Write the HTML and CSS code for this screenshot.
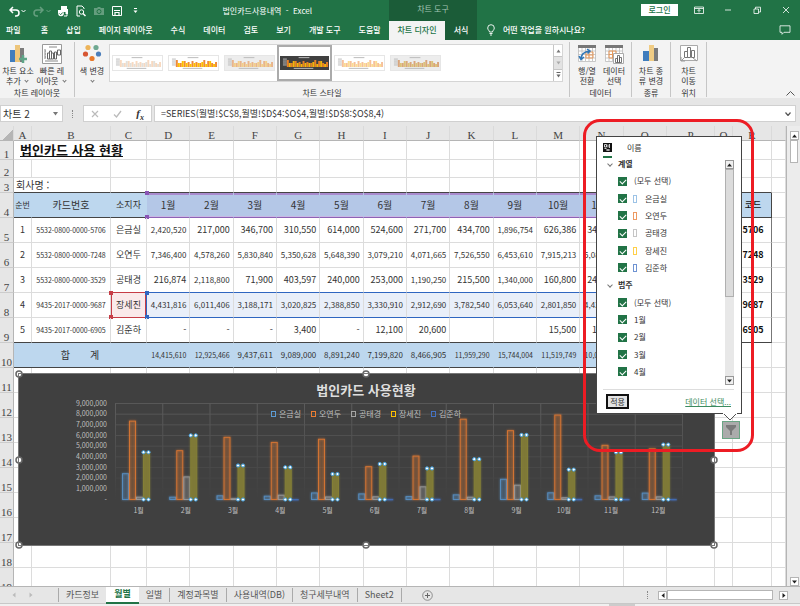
FILE: index.html
```html
<!DOCTYPE html>
<html lang="ko">
<head>
  <meta charset="UTF-8">
  <meta name="viewport" content="width=device-width, initial-scale=1">
  <title>법인카드사용내역 - Excel</title>
  <link rel="stylesheet" href="styles.css">
</head>
<body>

  <svg class="defs" width="0" height="0">
    <symbol id="thumb" viewBox="0 0 50 14">
      <path class="t-grid" d="M3 3h4M3 5h4M3 7h4M3 9h4M19 1.500h11M14 12.500h20" fill="none" stroke-width="1"/>
      <path class="t-a" d="M7 4h2v7H7zM11 7h2v4h-2zM15 5h2v6h-2zM19 6h2v5h-2zM23 5h2v6h-2zM27 6h2v5h-2zM31 7h2v4h-2zM35 4h2v7h-2zM39 5h2v6h-2zM43 7h2v4h-2zM47 6h2v5h-2z"/>
      <path class="t-b" d="M9 7h2v4H9zM13 5h2v6h-2zM17 7h2v4h-2zM21 8h2v3h-2zM25 7h2v4h-2zM29 7h2v4h-2zM33 6h2v5h-2zM37 8h2v3h-2zM41 5h2v6h-2zM45 8h2v3h-2z"/>
    </symbol>
  </svg>

  <div class="app">

    <header class="titlebar">
      <div class="title-left">
        <div class="quick">
          <button aria-label="실행 취소"><svg width="14" height="12" viewBox="0 0 14 12"><path d="M3 5h6a3 3 0 0 1 0 6H8M6 2L3 5l3 3" fill="none" stroke="#fff" stroke-width="1.5"/></svg></button>
          <button class="drop" aria-label="취소 목록"><svg width="5" height="4" viewBox="0 0 5 4"><path d="M.5 1l2 2 2-2" fill="none" stroke="#fff"/></svg></button>
          <button class="dim" aria-label="다시 실행"><svg width="14" height="12" viewBox="0 0 14 12"><path d="M11 5H5a3 3 0 0 0 0 6h1M8 2l3 3-3 3" fill="none" stroke="#fff" stroke-width="1.5"/></svg></button>
          <button class="drop dim" aria-label="실행 목록"><svg width="5" height="4" viewBox="0 0 5 4"><path d="M.5 1l2 2 2-2" fill="none" stroke="#fff"/></svg></button>
          <button aria-label="빠른 인쇄"><svg width="12" height="12" viewBox="0 0 12 12"><path d="M4 4V1h6v3h1v5H9V7H4v1H1V5h3z" fill="#fff"/><circle cx="4" cy="8.500" r="2.800" fill="#fff"/><path d="M2.500 8.500l1.200 1.200 2-2.200" fill="none" stroke="#217346"/><path d="M8 8h2v3H7" fill="none" stroke="#fff"/></svg></button>
          <button aria-label="인쇄 미리 보기"><svg width="12" height="12" viewBox="0 0 12 12"><path d="M9 4V3L7 1H2v10h3" fill="none" stroke="#fff"/><circle cx="6.500" cy="7" r="2.200" fill="none" stroke="#fff"/><path d="M8 8.500l2.500 2.500" stroke="#fff" stroke-width="1.500"/></svg></button>
          <button class="dim" aria-label="카메라"><svg width="12" height="12" viewBox="0 0 12 12"><path d="M1 3h3l1-1h2l1 1h3v7H1z" fill="#fff"/><circle cx="6" cy="6.500" r="2" fill="none" stroke="#217346"/></svg></button>
          <button aria-label="저장"><svg width="12" height="12" viewBox="0 0 12 12"><path d="M1.500 1.500h9v9h-9z" fill="none" stroke="#fff"/><path d="M3 5.500h6M4 10.500v-3h4v3" fill="none" stroke="#fff" stroke-width="1.200"/></svg></button>
          <button class="drop" aria-label="도구 모음 사용자 지정"><svg width="5" height="6" viewBox="0 0 5 6"><path d="M1 .5h3" stroke="#fff"/><path d="M.5 2.500h4l-2 2.500z" fill="#fff"/></svg></button>
          <span class="doc-name">법인카드사용내역 &nbsp;- &nbsp;Excel</span>
        </div>
        <nav class="tabs">
          <a href="#" class="file">파일</a>
          <a href="#">홈</a>
          <a href="#">삽입</a>
          <a href="#">페이지 레이아웃</a>
          <a href="#">수식</a>
          <a href="#">데이터</a>
          <a href="#">검토</a>
          <a href="#">보기</a>
          <a href="#">개발 도구</a>
          <a href="#">도움말</a>
        </nav>
      </div>
      <div class="chart-tools">
        <span>차트 도구</span>
        <nav>
          <a href="#" class="active">차트 디자인</a>
          <a href="#">서식</a>
        </nav>
      </div>
      <div class="title-right">
        <div class="window">
          <button class="login">로그인</button>
          <button aria-label="리본 표시 옵션"><svg width="10" height="10" viewBox="0 0 10 10"><path d="M.5 2h9v6.500h-9zM.5 3.500h9M5 7.500v-3M3.500 6L5 4.500 6.500 6" fill="none" stroke="#fff" stroke-width=".8"/></svg></button>
          <button aria-label="최소화"><svg width="10" height="10" viewBox="0 0 10 10"><path d="M2 5h6" stroke="#fff" stroke-width=".8"/></svg></button>
          <button aria-label="이전 크기로"><svg width="10" height="10" viewBox="0 0 10 10"><path d="M2 4h4.500v4.500H2zM3.500 4V2.200h5V7H6.500" fill="none" stroke="#fff" stroke-width=".8"/></svg></button>
          <button aria-label="닫기"><svg width="10" height="10" viewBox="0 0 10 10"><path d="M2 2l6 6M8 2L2 8" stroke="#fff" stroke-width=".8"/></svg></button>
        </div>
        <div class="tell-me">
          <svg width="10" height="12" viewBox="0 0 10 12"><path d="M3.500 8c0-1.500-1.800-2-1.800-4a3.300 3.300 0 0 1 6.600 0c0 2-1.800 2.500-1.800 4zM3.500 9.500h3M4 11h2" fill="none" stroke="#fff" stroke-width=".9"/></svg>
          <span>어떤 작업을 원하시나요?</span>
          <button aria-label="메모"><svg width="12" height="10" viewBox="0 0 12 10"><path d="M1 .8h10v6.500H5L3 9.300v-2H1z" fill="none" stroke="#fff" stroke-width=".8"/></svg></button>
        </div>
      </div>
    </header>

    <section class="ribbon">
      <div class="group layout">
        <div class="tools">
          <button>
            <svg width="20" height="20" viewBox="0 0 20 20"><path d="M2 6h5v12H2z" fill="#3f7dbd"/><path d="M7 1h5v17H7z" fill="#edc57a"/><path d="M12 4h4v14h-4z" fill="#7b7b7b"/><path d="M15 11v8M11 15h8" stroke="#5fa588" stroke-width="2.500"/></svg>
            차트 요소<br>추가 <i class="chev"></i>
          </button>
          <button>
            <svg width="20" height="20" viewBox="0 0 20 20"><path d="M.5 .5h19v19H.5z" fill="#fff" stroke="#999"/><path d="M7 3h8M3 5v10M3 17h13M3 7h1M3 10h1M3 13h1" stroke="#888" fill="none"/><path d="M5.500 9h2v6h-2zM7.500 7h2v8h-2zM9.500 9h2v6h-2zM12.500 8h2v7h-2zM15.500 6h3v5h-3z" fill="#fff" stroke="#666"/></svg>
            빠른 레<br>이아웃 <i class="chev"></i>
          </button>
        </div>
        <div class="label">차트 레이아웃</div>
      </div>
      <div class="group styles">
        <div class="tools">
          <button class="color-btn">
            <svg width="20" height="20" viewBox="0 0 20 20"><circle cx="6" cy="3.500" r="2.600" fill="#edb45a"/><circle cx="14" cy="3.500" r="2.600" fill="#6fa891"/><circle cx="3.500" cy="10" r="2.600" fill="#d75632"/><circle cx="16.500" cy="10" r="2.600" fill="#4a7ebb"/><circle cx="10" cy="14.500" r="2.600" fill="#e8782a"/></svg>
            색 변경<br><i class="chev"></i>
          </button>
          <div class="gallery">
            <button class="st1" aria-label="스타일 1"><svg><use href="#thumb"/></svg></button>
            <button class="st2" aria-label="스타일 2"><svg><use href="#thumb"/></svg></button>
            <button class="st3" aria-label="스타일 3"><svg><use href="#thumb"/></svg></button>
            <button class="st4 picked" aria-label="스타일 4"><svg><use href="#thumb"/></svg></button>
            <button class="st5" aria-label="스타일 5"><svg><use href="#thumb"/></svg></button>
            <button class="st6" aria-label="스타일 6"><svg><use href="#thumb"/></svg></button>
            <div class="spin">
              <button aria-label="위로"><svg width="5" height="4" viewBox="0 0 5 4"><path d="M.5 3.500h4l-2-3z" fill="#777"/></svg></button>
              <button class="off" aria-label="아래로"><svg width="5" height="4" viewBox="0 0 5 4"><path d="M.5 .5h4l-2 3z" fill="#aaa"/></svg></button>
              <button aria-label="자세히"><svg width="5" height="6" viewBox="0 0 5 6"><path d="M.5 .5h4" stroke="#666"/><path d="M.5 2.500h4l-2 3z" fill="#666"/></svg></button>
            </div>
          </div>
        </div>
        <div class="label">차트 스타일</div>
      </div>
      <div class="group data">
        <div class="tools">
          <button>
            <svg width="20" height="20" viewBox="0 0 20 20"><path d="M1.500 3.500h17v14h-17zM1.500 7h17M1.500 10.500h17M1.500 14h17M5 3v14M8.500 3v14M12 3v14M15.500 3v14" fill="#fff" stroke="#bbb" stroke-width=".8"/><path d="M1 1h18v3H1z" fill="#777"/><path d="M9 8h7v6H9zM12 8v6M9 11h7" fill="none" stroke="#e89a5c"/><path d="M4 15c0-4 3-7 8-8M10 5l3 2-2.500 2.500M2 12l2 3.500L7 13" fill="none" stroke="#2e75b6" stroke-width="1.500"/></svg>
            행/열<br>전환
          </button>
          <button>
            <svg width="20" height="20" viewBox="0 0 20 20"><path d="M1.500 3.500h17v14h-17zM1.500 7h17M1.500 10.500h17M1.500 14h17M5 3v14M8.500 3v14M12 3v14M15.500 3v14" fill="#fff" stroke="#bbb" stroke-width=".8"/><path d="M1 1h18v3H1z" fill="#777"/><path d="M5 7h7v7H5zM8.500 7v7M5 10.500h7" fill="none" stroke="#e89a5c"/><path d="M9.500 9.500h10v10h-10z" fill="#fff" stroke="#aaa"/><path d="M11.500 14.500h2v4h-2zM13.500 11.500h2v7h-2zM15.500 13.500h2v5h-2z" fill="#fff" stroke="#555" stroke-width=".8"/></svg>
            데이터<br>선택
          </button>
        </div>
        <div class="label">데이터</div>
      </div>
      <div class="group kind">
        <div class="tools">
          <button>
            <svg width="20" height="20" viewBox="0 0 20 20"><path d="M2 7h6v10H2z" fill="#3f7dbd"/><path d="M8 1h5v16H8z" fill="#f0cc84"/><path d="M13 4h4v13h-4z" fill="#7b7b7b"/></svg>
            차트 종<br>류 변경
          </button>
        </div>
        <div class="label">종류</div>
      </div>
      <div class="group place">
        <div class="tools">
          <button>
            <svg width="20" height="20" viewBox="0 0 20 20"><path d="M1.500 1.500h17v15h-17z" fill="#fff" stroke="#aaa"/><path d="M5.500 7.500h3v6h-3zM8.500 3.500h3v10h-3zM12.500 6.500h3v7h-3z" fill="#fff" stroke="#777"/><path d="M2 17l4-4M2 13v4h4M18 17l-4-3" fill="none" stroke="#999"/></svg>
            차트<br>이동
          </button>
        </div>
        <div class="label">위치</div>
      </div>
      <button class="collapse" aria-label="리본 메뉴 축소"><svg width="9" height="5" viewBox="0 0 9 5"><path d="M.5 4.500l4-4 4 4" fill="none" stroke="#555"/></svg></button>
    </section>

    <div class="formula-bar">
      <div class="name-box">
        <input type="text" value="차트 2" aria-label="이름 상자">
        <svg width="5" height="4" viewBox="0 0 5 4"><path d="M0 0h5L2.500 3.500z" fill="#777"/></svg>
      </div>
      <span class="dots"></span>
      <div class="fx">
        <button aria-label="취소"><svg width="8" height="8" viewBox="0 0 8 8"><path d="M1 1l6 6M7 1L1 7" stroke="#bbb" stroke-width="1.200"/></svg></button>
        <button aria-label="입력"><svg width="9" height="8" viewBox="0 0 9 8"><path d="M1 4.500L3.500 7 8 1" fill="none" stroke="#bbb" stroke-width="1.300"/></svg></button>
        <button class="fn" aria-label="함수 삽입"><i>f</i><sub>x</sub></button>
      </div>
      <div class="formula">
        <input type="text" value="=SERIES(월별!$C$8,월별!$D$4:$O$4,월별!$D$8:$O$8,4)" aria-label="수식">
        <svg width="6" height="4" viewBox="0 0 6 4"><path d="M.5 .5L3 3.500 5.500 .5" fill="none" stroke="#555" stroke-width="1.200"/></svg>
      </div>
    </div>

    <main class="workspace">
      <div class="sheet">
        <table>
          <colgroup>
            <col class="c-num"><col class="c-a"><col class="c-b"><col class="c-c">
            <col span="12">
            <col class="c-p"><col class="c-a"><col class="c-r"><col class="c-num">
          </colgroup>
          <thead>
            <tr id="letters"></tr>
          </thead>
          <tbody id="rows"></tbody>
        </table>
      </div>

      <div class="vscroll">
        <button aria-label="위로 스크롤"><svg width="5" height="4" viewBox="0 0 5 4"><path d="M0 3.500h5L2.500 .5z" fill="#222"/></svg></button>
        <div class="thumb"></div>
        <button class="down" aria-label="아래로 스크롤"><svg width="5" height="4" viewBox="0 0 5 4"><path d="M0 .5h5L2.500 3.500z" fill="#222"/></svg></button>
      </div>

      <div class="chart">
        <svg id="chart" viewBox="0 0 695 171">
          <defs>
            <linearGradient id="fade" gradientUnits="userSpaceOnUse" x1="0" y1="29" x2="0" y2="125">
              <stop offset="0" stop-color="#5c5c5c"/>
              <stop offset="1" stop-color="#404040"/>
            </linearGradient>
          </defs>
        </svg>
      </div>

      <button class="filter-btn" aria-label="차트 필터"><svg width="12" height="12" viewBox="0 0 12 12"><path d="M1 1h10v2L7 7v4H5V7L1 3z" fill="#7a7a7a"/></svg></button>

      <div class="popup">
        <div class="popup-tabs">
          <button class="on" aria-label="값"><svg width="9" height="9" viewBox="0 0 9 9"><path d="M0 0h9v9H0z" fill="#111"/><path d="M1.500 1.500h2v2.500h-2zM1.500 5.500h2M5 1.500v3M6.500 1v4M3 7h4M5 6v2" fill="none" stroke="#fff" stroke-width=".8"/></svg></button>
          <button>이름</button>
        </div>
        <div class="popup-body">
          <div class="choices">
            <h4><i class="chev"></i>계열</h4>
            <label><input type="checkbox" checked>(모두 선택)</label>
            <label><input type="checkbox" checked><b class="key k1"></b>은금실</label>
            <label><input type="checkbox" checked><b class="key k2"></b>오연두</label>
            <label><input type="checkbox" checked><b class="key k3"></b>공태경</label>
            <label><input type="checkbox" checked><b class="key k4"></b>장세진</label>
            <label><input type="checkbox" checked><b class="key k5"></b>김준하</label>
            <h4><i class="chev"></i>범주</h4>
            <label><input type="checkbox" checked>(모두 선택)</label>
            <label><input type="checkbox" checked>1월</label>
            <label><input type="checkbox" checked>2월</label>
            <label><input type="checkbox" checked>3월</label>
            <label><input type="checkbox" checked>4월</label>
          </div>
          <div class="list-scroll">
            <button aria-label="위로"><svg width="5" height="4" viewBox="0 0 5 4"><path d="M0 3.500h5L2.500 .5z" fill="#222"/></svg></button>
            <div class="thumb"></div>
            <button class="down" aria-label="아래로"><svg width="5" height="4" viewBox="0 0 5 4"><path d="M0 .5h5L2.500 3.500z" fill="#222"/></svg></button>
          </div>
        </div>
        <div class="popup-foot">
          <button>적용</button>
          <a href="#">데이터 선택...</a>
        </div>
        <svg class="tail" width="14" height="8" viewBox="0 0 14 8"><path d="M0 0h14v1h-1L7 7 1 1H0z" fill="#fff"/><path d="M1 1l6 6 6-6" fill="none" stroke="#555"/></svg>
      </div>

      <div class="mark"></div>
    </main>

    <footer class="sheet-tabs">
      <div class="arrows">
        <button aria-label="이전 시트"><svg width="4" height="6" viewBox="0 0 4 6"><path d="M3.500 .5v5L.5 3z" fill="#bbb"/></svg></button>
        <button aria-label="다음 시트"><svg width="4" height="6" viewBox="0 0 4 6"><path d="M.5 .5v5l3-2.500z" fill="#bbb"/></svg></button>
      </div>
      <a href="#" class="before">카드정보</a>
      <a href="#" class="active">월별</a>
      <a href="#">일별</a>
      <a href="#">계정과목별</a>
      <a href="#">사용내역(DB)</a>
      <a href="#">청구세부내역</a>
      <a href="#">Sheet2</a>
      <button class="add" aria-label="새 시트"><svg width="11" height="11" viewBox="0 0 11 11"><path d="M5.500 3v5M3 5.500h5" stroke="#666"/><circle cx="5.500" cy="5.500" r="4.800" fill="none" stroke="#777" stroke-width=".8"/></svg></button>
      <span class="dots"></span>
      <div class="hscroll">
        <button aria-label="왼쪽"><svg width="4" height="5" viewBox="0 0 4 5"><path d="M3.500 0v5L.5 2.500z" fill="#222"/></svg></button>
        <div class="thumb"></div>
        <button aria-label="오른쪽"><svg width="4" height="5" viewBox="0 0 4 5"><path d="M.5 0v5l3-2.500z" fill="#222"/></svg></button>
      </div>
    </footer>
    <div class="status"><span></span></div>
  </div>

  <script>
    const cards = [
      { no: 1, card: '5532-0800-0000-5706', name: '은금실', code: '5706', v: [2420520, 217000, 346700, 310550, 614000, 524600, 271700, 434700, 1896754, 626386, 345200, 600000] },
      { no: 2, card: '5532-0800-0000-7248', name: '오연두', code: '7248', v: [7346400, 4578260, 5830840, 5350628, 5648390, 3079210, 4071665, 7526550, 6453610, 7915213, 5080400, 4750000] },
      { no: 3, card: '5532-0800-0000-3529', name: '공태경', code: '3529', v: [216874, 2118800, 71900, 403597, 240000, 253000, 1190250, 215500, 1340000, 160800, 241500, 250000] },
      { no: 4, card: '9435-2017-0000-9687', name: '장세진', code: '9687', v: [4431816, 6011406, 3188171, 3020825, 2388850, 3330910, 2912690, 3782540, 6053640, 2801850, 4420300, 5150000] },
      { no: 5, card: '9435-2017-0000-6905', name: '김준하', code: '6905', v: [0, 0, 0, 3400, 0, 12100, 20600, null, null, 15500, 12500, 10000] }
    ];
    const totals = [14415610, 12925466, 9437611, 9089000, 8891240, 7199820, 8466905, 11959290, 15744004, 11519749, 10099900];

    function amount(n) {
      if (n === null) return '';
      return n === 0 ? '-' : n.toLocaleString('en-US');
    }

    // wide numbers shrink to fit the column
    function sizeOf(n) {
      if (n >= 10000000) return 'n-small';
      return n >= 1000000 ? 'n-mid' : 'n-big';
    }

    function blanks(count) {
      return '<td></td>'.repeat(count);
    }

    function renderSheet() {
      document.getElementById('letters').innerHTML = '<th class="corner"></th>' +
        'ABCDEFGHIJKLMNOPQR'.split('').map(l => `<th>${l}</th>`).join('') + '<th></th>';

      let html = '';
      html += `<tr class="r1"><th>1</th><td colspan="3" class="sheet-title">법인카드 사용 현황</td>${blanks(16)}</tr>`;
      html += `<tr class="r2"><th>2</th>${blanks(19)}</tr>`;
      html += `<tr class="r3"><th>3</th><td colspan="2" class="company">회사명 :</td>${blanks(14)}<td class="plain"></td><td></td><td class="plain"></td></tr>`;

      let months = '';
      for (let m = 1; m <= 11; m++) {
        let dots = '';
        if (m === 1) dots = '<i class="dot tl"></i><i class="dot bl"></i>';
        months += `<td class="month">${dots}${m}월</td>`;
      }
      html += `<tr class="head"><th>4</th><td class="small">순번</td><td>카드번호</td><td class="name">소지자</td>${months}<td class="month"></td><td></td><td class="plain"></td><td class="code">코드</td><td class="plain"></td></tr>`;

      cards.forEach((c, i) => {
        const sel = c.no === 4;
        const nums = c.v.slice(0, 11).map((n, k) => {
          const dots = sel && k === 0 ? '<i class="dot tl"></i><i class="dot bl"></i>' : '';
          return `<td class="num ${sizeOf(n)}">${dots}${amount(n)}</td>`;
        }).join('');
        const nameDots = sel ? '<i class="dot tl"></i><i class="dot bl"></i>' : '';
        html += `<tr class="item${sel ? ' selected' : ''}${c.no === 3 ? ' above' : ''}"><th>${i + 5}</th><td class="no">${c.no}</td><td class="card">${c.card}</td><td class="name">${nameDots}${c.name}</td>${nums}<td class="num"></td><td></td><td></td><td class="code">${c.code}</td><td></td></tr>`;
      });

      html += '<tr class="total"><th>10</th><td colspan="3">합&emsp;&emsp;계</td>' +
        totals.map(n => `<td class="num ${sizeOf(n)}">${amount(n)}</td>`).join('') +
        '<td></td><td></td><td class="plain"></td><td class="plain"></td><td class="plain"></td></tr>';

      for (let r = 11; r <= 19; r++) html += `<tr><th>${r}</th>${blanks(19)}</tr>`;
      document.getElementById('rows').innerHTML = html;
    }

    function renderChart() {
      const left = 96, right = 663, top = 29.5, base = 125.5;
      const unit = (base - top) / 9;
      const slot = (right - left) / 12;
      let s = '<text class="c-title" x="347" y="21">법인카드 사용현황</text>';

      for (let i = 0; i <= 9; i++) {
        const y = base - unit * i;
        if (i > 0) s += `<path d="M${left} ${y}H${right}" class="grid" opacity="${i / 9}"/>`;
        s += `<text class="c-axis" x="88" y="${y + 2}">${i ? i + ',000,000' : '-'}</text>`;
      }
      for (let i = 0; i <= 12; i++) {
        s += `<rect x="${left + slot * i}" y="${top}" width="1" height="96" fill="url(#fade)"/>`;
      }

      cards.forEach((c, k) => {
        s += `<g class="series s${k + 1}">`;
        c.v.forEach((n, m) => {
          if (!n) return;
          const h = unit * n / 1000000;
          s += `<rect x="${left + slot * m + 7.5 + k * 7}" y="${base - h}" width="6" height="${Math.max(h, .5)}"/>`;
        });
        s += '</g>';
      });

      // selected series
      cards[3].v.forEach((n, m) => {
        const x = left + slot * m + 28.5;
        const y = base - unit * n / 1000000;
        [[x, y], [x + 5, y], [x, base], [x + 5, base]].forEach(p => {
          s += `<circle class="pt" cx="${p[0]}" cy="${p[1]}" r="1.6"/>`;
        });
      });

      for (let m = 0; m < 12; m++) {
        s += `<text class="c-month" x="${left + slot * (m + .5)}" y="139">${m + 1}월</text>`;
      }
      cards.forEach((c, k) => {
        s += `<g class="legend s${k + 1}"><rect x="${252.5 + k * 40}" y="37.5" width="4" height="5"/></g>`;
        s += `<text class="c-legend" x="${260 + k * 40}" y="42.500">${c.name}</text>`;
      });
      [[0, 0], [347, 0], [695, 0], [0, 86], [695, 86], [0, 171], [347, 171], [695, 171]].forEach(p => {
        s += `<circle class="handle" cx="${p[0]}" cy="${p[1]}" r="3"/>`;
      });
      document.getElementById('chart').innerHTML += s;
    }

    renderSheet();
    renderChart();
  </script>

</body>
</html>
```
FILE: styles.css
```css
* {
  box-sizing: border-box;
}
body {
  margin: 0;
  font-family: "Noto Sans CJK KR", sans-serif;
  font-size: 8px;
  line-height: 10px;
  color: #333;
  background-color: #e6e6e6;
}
button {
  font: inherit;
  color: inherit;
  padding: 0;
  border: none;
  background: none;
}
input {
  font: inherit;
  color: inherit;
  margin: 0;
}
a {
  color: inherit;
  text-decoration: none;
}
svg {
  display: block;
}
.defs {
  position: absolute;
}
.app {
  display: flex;
  flex-direction: column;
  height: 100vh;
  overflow: hidden;
}

/* TITLE BAR */
.titlebar {
  display: flex;
  height: 40px;
  flex: none;
  background-color: #217346;
  color: white;
}
.title-left {
  width: 389px;
}
.quick {
  display: flex;
  align-items: center;
  height: 21px;
  padding-left: 7px;
}
.quick button {
  width: 14px;
  margin-right: 4px;
}
.quick .drop {
  width: 5px;
  margin: 0 6px 0 -4px;
}
.quick .drop:nth-of-type(9) {
  margin-left: 4px;
}
.dim {
  opacity: 0.3;
}
.doc-name {
  flex: 1;
  padding-right: 77px;
  text-align: right;
  white-space: nowrap;
}
.tabs {
  display: flex;
  gap: 18px;
  height: 19px;
  line-height: 18px;
  padding-left: 6px;
  font-weight: 500;
  white-space: nowrap;
}
.tabs .file {
  margin-right: 2px;
}
.chart-tools {
  display: flex;
  flex-direction: column;
  width: 88px;
  background-color: #1b5c38;
  text-align: center;
}
.chart-tools span {
  height: 21px;
  line-height: 18px;
  color: #a5c5b3;
}
.chart-tools nav {
  display: flex;
  flex: 1;
  line-height: 18px;
  font-weight: 500;
}
.chart-tools a {
  flex: 1;
}
.chart-tools .active {
  flex: none;
  width: 56px;
  background-color: #f3f3f3;
  color: #217346;
}
.title-right {
  flex: 1;
}
.window {
  display: flex;
  align-items: center;
  justify-content: flex-end;
  gap: 19px;
  height: 20px;
  padding-right: 9px;
}
.login {
  width: 37px;
  height: 12px;
  margin-right: -3px;
  background-color: white;
  color: #217346;
  font-weight: 500;
}
.tell-me {
  display: flex;
  align-items: center;
  gap: 7px;
  height: 20px;
  padding: 0 9px;
  font-weight: 500;
}
.tell-me button {
  margin-left: auto;
}

/* RIBBON */
.ribbon {
  display: flex;
  flex: none;
  height: 58px;
  padding-top: 2px;
  background-color: #f3f3f3;
}
.group {
  display: flex;
  flex-direction: column;
  justify-content: space-between;
  margin-bottom: 1px;
  border-right: 1px solid #c6c6c6;
  text-align: center;
}
.tools {
  display: flex;
  justify-content: center;
  padding-top: 2px;
}
.tools > button {
  display: flow-root;
  width: 34px;
  white-space: nowrap;
}
.tools > button > svg {
  margin: 0 auto 2px;
}
.label {
  height: 9px;
}
.layout {
  width: 75px;
}
.layout .tools {
  justify-content: flex-start;
  padding-left: 1px;
}
.styles {
  flex: 0 1 495px;
}
.data {
  width: 62px;
}
.data .tools > button {
  width: 27px;
}
.kind {
  width: 39px;
}
.place {
  width: 36px;
}
.chev {
  display: inline-block;
  width: 3px;
  height: 3px;
  margin: 0 2px 2px;
  border: solid #777;
  border-width: 0 1px 1px 0;
  transform: rotate(45deg);
}
.collapse {
  margin: auto 5px 2px auto;
}
.gallery {
  display: flex;
  align-items: center;
  flex: 1;
  gap: 5px;
  height: 38px;
  margin-right: 6px;
  padding-left: 2px;
  border: 1px solid #d5d5d5;
  background-color: white;
}
.gallery > button {
  width: 51px;
  height: 16px;
  border: 1px solid #e6e6e6;
}
.gallery > button svg {
  width: 100%;
  height: 14px;
}
.gallery > .picked {
  width: 55px;
  height: 36px;
  margin: 0 -3px;
  padding: 9px 1px;
  border: 2px solid #ababab;
}
.picked svg {
  background-color: #404040;
}
.t-grid {
  stroke: #bbb;
}
.t-a {
  fill: var(--a);
}
.t-b {
  fill: var(--b);
}
.st1 {
  --a: #f8d9c0;
  --b: #e3e0da;
}
.st2 {
  --a: #ee8a3a;
  --b: #ffc000;
}
.st3 {
  --a: #e8b48c;
  --b: #f2cf8a;
  background-color: #ededed;
}
.st4 {
  --a: #e87f28;
  --b: #f2b50c;
}
.st5 {
  --a: #f6c09a;
  --b: #fbdc93;
}
.st6 {
  --a: #d9a57c;
  --b: #dcc279;
  background-color: #ededed;
}
.spin {
  display: flex;
  flex-direction: column;
  width: 9px;
  height: 36px;
  margin-left: auto;
  border-left: 1px solid #c6c6c6;
}
.spin button {
  display: grid;
  place-items: center;
  flex: 1;
}
.spin .off {
  border: solid #c6c6c6;
  border-width: 1px 0;
  background-color: #e3e3e3;
}

/* FORMULA BAR */
.formula-bar {
  display: flex;
  flex: none;
  height: 28px;
  padding: 7px 4px 4px 0;
  font-size: 10px;
}
.name-box,
.fx,
.formula {
  display: flex;
  align-items: center;
  border: 1px solid #d0d0d0;
  background-color: white;
}
.name-box {
  width: 63px;
  padding-right: 4px;
}
.formula-bar input {
  flex: 1;
  min-width: 0;
  height: 15px;
  padding: 0 2px;
  border: none;
  background: none;
}
.dots {
  width: 2px;
  height: 8px;
  margin: auto 9px;
  border-left: 1px dotted #888;
}
.fx {
  justify-content: space-around;
  width: 69px;
  margin-right: 2px;
}
.fn {
  font-family: "Liberation Serif", serif;
  font-size: 11px;
  font-weight: bold;
}
.fn sub {
  font-size: 8px;
  line-height: 0;
  font-style: italic;
}
.formula {
  flex: 1;
  padding: 0 4px;
}
.formula input {
  font-size: 9px;
}

/* SHEET */
.workspace {
  position: relative;
  display: flex;
  flex: 1;
  min-height: 0;
}
.sheet {
  flex: 1;
  overflow: hidden;
  background-color: white;
}
.sheet table {
  width: 100%;
  table-layout: fixed;
  border-collapse: separate;
  border-spacing: 0;
  font-size: 10px;
}
.c-num {
  width: 14px;
}
.c-a {
  width: 18px;
}
.c-b {
  width: 79px;
}
.c-c {
  width: 36px;
}
.c-p {
  width: 48px;
}
.c-r {
  width: 39px;
}
.sheet th {
  padding: 0;
  background-color: #e6e6e6;
  font: 11px/10px "Liberation Serif", serif;
  color: #444;
}
.sheet thead th {
  height: 15px;
  padding-top: 3px;
  border-right: 1px solid #dadada;
  border-bottom: 1px solid #b5b5b5;
}
.sheet thead .corner {
  background: linear-gradient(135deg, #e6e6e6 60%, #b5b5b5 60%);
}
.sheet tbody th {
  vertical-align: bottom;
  border-right: 1px solid #b5b5b5;
  border-bottom: 1px solid #ccc;
}
.sheet td {
  position: relative;
  height: 25px;
  padding: 0;
  border-right: 1px solid #dcdcdc;
  border-bottom: 1px solid #dcdcdc;
  text-align: center;
  white-space: nowrap;
}
.sheet .r1 td {
  height: 19px;
}
.sheet .r2 td {
  height: 18px;
}
.sheet .r3 td {
  height: 15px;
  border-bottom-color: #444;
}
.sheet .r3 .plain {
  border-bottom-color: #dcdcdc;
}
.sheet .sheet-title {
  padding-left: 6px;
  text-align: left;
  font-size: 13px;
  font-weight: bold;
  color: #111;
  text-decoration: underline;
}
.sheet .company {
  padding-left: 2px;
  text-align: left;
}
.sheet .head td,
.sheet .total td {
  background-color: #bdd7ee;
  border-right-color: #bdd7ee;
  border-bottom-color: #444;
}
.sheet .head .month {
  background-color: #b4c7e7;
  border-right-color: #b4c7e7;
  border-bottom-color: #8d62b5;
  box-shadow: inset 0 2px #a98bce, inset 0 -1px #c9b8e4;
}
.sheet .head .plain,
.sheet .total .plain {
  background-color: white;
  border-color: #dcdcdc;
}
.sheet .small {
  font-size: 8px;
}
.sheet .name,
.sheet .no {
  font-size: 9px;
}
.sheet .card {
  font-size: 7px;
}
.sheet .num {
  padding-right: 3px;
  text-align: right;
}
.n-small {
  font-size: 7px;
}
.n-mid {
  font-size: 8px;
}
.n-big {
  font-size: 9px;
}
.sheet .code {
  padding-left: 2px;
  border-right-color: #777;
  font-size: 9px;
  font-weight: bold;
  color: #111;
}
.sheet .head .code {
  border-right-color: #444;
  font-weight: 500;
}
.sheet .item:nth-child(9) td {
  border-bottom-color: #444;
}
.sheet .item:nth-child(9) td:last-child {
  border-bottom-color: #dcdcdc;
}
.sheet .above .num {
  border-bottom-color: #2f66c0;
}
.sheet .above .name {
  border-bottom-color: #c63c46;
}
.sheet .selected .num {
  background-color: #e9eff9;
  border-bottom-color: #2f66c0;
}
.sheet .selected .name {
  background-color: #fae9ea;
  border-bottom-color: #c63c46;
  border-right-color: #2f66c0;
  box-shadow: inset 1px 0 #c63c46, inset -1px 0 #c63c46;
}
.dot {
  position: absolute;
  left: -2px;
  width: 4px;
  height: 4px;
  background-color: #8a55b5;
}
.tl {
  top: -2px;
}
.bl {
  bottom: -2px;
}
.selected .num .dot {
  background-color: #2f66c0;
}
.selected .name .dot {
  background-color: #c63c46;
}

/* SCROLLBARS */
.vscroll {
  display: flex;
  flex-direction: column;
  width: 14px;
  padding: 5px 2px 0 3px;
  border-left: 1px solid #b5b5b5;
  background-color: #ececec;
}
.vscroll button,
.list-scroll button,
.hscroll button {
  display: grid;
  place-items: center;
  width: 9px;
  height: 9px;
  border: 1px solid #b5b5b5;
  background-color: white;
}
.vscroll .thumb {
  height: 23px;
  border: 1px solid #b5b5b5;
  background-color: white;
}
.down {
  margin-top: auto;
}

/* CHART */
.chart {
  position: absolute;
  top: 248px;
  left: 19px;
  right: 86px;
  background-color: #404040;
  outline: 1px solid #777;
}
.chart svg {
  width: 100%;
  overflow: visible;
}
.chart text {
  fill: #bfbfbf;
  font-size: 7px;
}
.chart .c-title {
  fill: #dedede;
  font-size: 13px;
  font-weight: bold;
  text-anchor: middle;
}
.c-axis {
  text-anchor: end;
}
.c-month {
  text-anchor: middle;
}
.chart .c-legend {
  font-size: 8px;
}
.grid {
  stroke: #585858;
}
.s1 {
  color: #5b9bd5;
}
.s2 {
  color: #ed7d31;
}
.s3 {
  color: #a5a5a5;
}
.s4 {
  color: #ffc000;
}
.s5 {
  color: #4472c4;
}
.series rect {
  fill: currentColor;
  fill-opacity: 0.15;
  stroke: currentColor;
  stroke-opacity: 0.75;
}
.series {
  filter: drop-shadow(0 0 1px currentColor);
}
.s4.series {
  color: #8a8436;
}
.s4.series rect {
  fill-opacity: 0.6;
  stroke-opacity: 0.8;
}
.legend rect {
  fill: none;
  stroke: currentColor;
}
.pt {
  fill: white;
  stroke: #3b9be0;
}
.handle {
  fill: white;
  stroke: #666;
  stroke-width: 1.5;
}

/* CHART FILTER */
.filter-btn {
  position: absolute;
  top: 295px;
  right: 60px;
  display: grid;
  place-items: center;
  width: 18px;
  height: 18px;
  border: 1px solid #6aa584;
  background-color: #ababab;
}
.popup {
  position: absolute;
  top: 10px;
  right: 58px;
  display: flex;
  flex-direction: column;
  width: 146px;
  height: 278px;
  padding: 6px 7px 0 6px;
  border: 1px solid #444;
  background-color: white;
}
.popup-tabs {
  display: flex;
  gap: 15px;
  height: 15px;
}
.popup-tabs .on {
  height: 15px;
  padding-bottom: 4px;
  border-bottom: 2px solid #217346;
}
.popup-tabs button:last-child {
  height: 10px;
}
.popup-body {
  display: flex;
  justify-content: space-between;
  flex: 1;
  padding: 1px 0 4px;
  border-bottom: 1px solid #ddd;
}
.choices {
  display: flex;
  flex-direction: column;
  justify-content: space-between;
  padding-bottom: 8px;
}
.choices h4 {
  display: flex;
  align-items: center;
  gap: 6px;
  margin: 0;
  font-size: 8px;
}
.choices .chev {
  width: 4px;
  height: 4px;
  margin: 0 0 0 5px;
}
.choices label {
  display: flex;
  align-items: center;
  gap: 7px;
  height: 10px;
  padding-left: 15px;
}
.choices input {
  display: grid;
  place-items: center;
  width: 9px;
  height: 9px;
  appearance: none;
  background-color: #217346;
}
.choices input:checked::after {
  content: "";
  width: 5px;
  height: 3px;
  border: solid white;
  border-width: 0 0 1px 1px;
  transform: rotate(-45deg);
}
.key {
  width: 4px;
  height: 8px;
  margin: 0 1px 0 -1px;
  border: 1px solid #9dc3e6;
}
.k2 {
  border-color: #ed9a63;
}
.k3 {
  border-color: #c5c5c5;
}
.k4 {
  border-color: #ffd04a;
}
.k5 {
  border-color: #6f93d2;
}
.list-scroll {
  display: flex;
  flex-direction: column;
  width: 9px;
  margin-top: 1px;
  background-color: #e8e8e8;
}
.list-scroll button {
  border-color: #999;
  background-color: #f0f0f0;
}
.list-scroll .thumb {
  height: 128px;
  border: 1px solid #b0b0b0;
  background-color: #dcdcdc;
}
.popup-foot {
  display: flex;
  align-items: center;
  justify-content: space-between;
  height: 23px;
  padding: 0 3px;
}
.popup-foot button {
  width: 23px;
  height: 15px;
  border: 2px solid #111;
  background-color: #e3e3e3;
  line-height: 8px;
}
.popup-foot a {
  color: #3c8c60;
  text-decoration: underline;
}
.tail {
  position: absolute;
  right: 4px;
  bottom: -8px;
}
.mark {
  position: absolute;
  top: -7px;
  right: 46px;
  width: 171px;
  height: 333px;
  border: 3px solid #ed1c24;
  border-radius: 17px;
  pointer-events: none;
}

/* SHEET TABS */
.sheet-tabs {
  display: flex;
  align-items: center;
  flex: none;
  height: 18px;
  border-top: 1px solid #b5b5b5;
  border-bottom: 1px solid #c8c8c8;
  font-size: 9px;
  color: #555;
}
.arrows {
  display: flex;
  justify-content: space-between;
  width: 59px;
  height: 14px;
  padding: 0 25px 0 12px;
  border-right: 1px solid #aaa;
}
.sheet-tabs a {
  height: 14px;
  padding: 0 7px;
  border-right: 1px solid #aaa;
  line-height: 14px;
}
.sheet-tabs .before {
  border: none;
}
.sheet-tabs .active {
  height: 17px;
  padding: 0 8px;
  border-right: none;
  border-bottom: 2px solid #217346;
  background-color: white;
  color: #217346;
  font-weight: bold;
}
.add {
  margin: 0 auto 0 20px;
}
.hscroll {
  display: flex;
  align-items: center;
  width: 130px;
  margin-right: 12px;
}
.hscroll .thumb {
  flex: 1;
  height: 10px;
  margin-right: 6px;
  border: 1px solid #b5b5b5;
  background-color: white;
}
.status {
  flex: none;
  height: 2px;
  background-color: #f0f0f0;
}
.status span {
  display: block;
  width: 26px;
  height: 2px;
  margin: 0 165px 0 auto;
  background-color: #ccc;
}
```
